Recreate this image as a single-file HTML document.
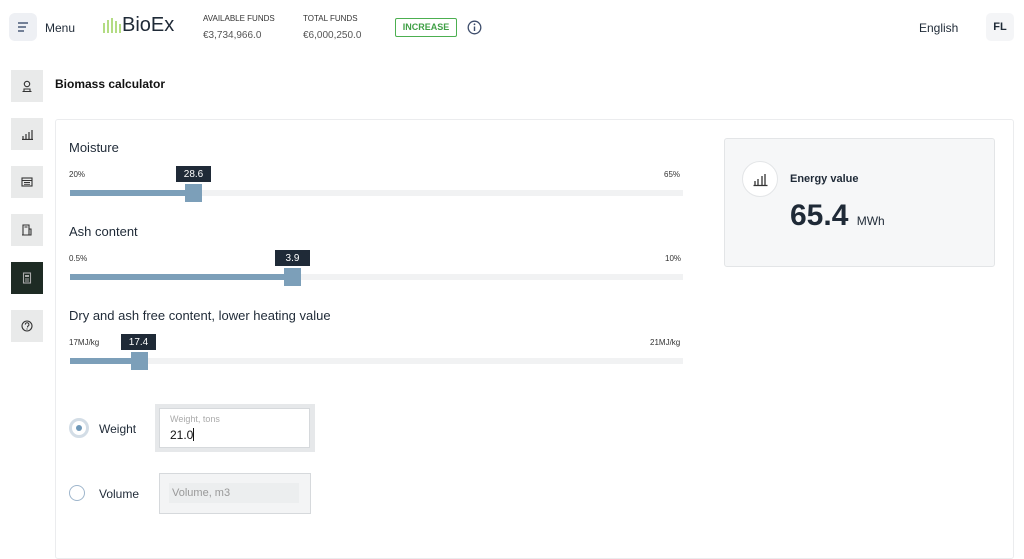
<!DOCTYPE html>
<html><head><meta charset="utf-8"><style>
*{box-sizing:border-box;margin:0;padding:0}
body{width:1024px;height:543px;overflow:hidden;background:#fff;font-family:"Liberation Sans",sans-serif;color:#1f2a37;position:relative}
.a{position:absolute}
.sb{position:absolute;left:11px;width:32px;height:32px;background:#e9eaea;display:flex;align-items:center;justify-content:center}
.track{position:absolute;left:70px;width:613px;height:6px;background:#f1f2f3}
.fill{position:absolute;left:0;top:0;height:6px;background:#7c9fb9}
.thumb{position:absolute;width:17px;height:18px;background:#7c9fb9;top:-6px}
.lab{position:absolute;height:16px;width:35px;background:#1f2a37;color:#fff;font-size:10px;display:flex;align-items:center;justify-content:center}
.ttl{position:absolute;left:69px;font-size:13px;color:#1f2a37}
.sm{position:absolute;font-size:8px;color:#333}
</style></head><body>
<div class="a" style="left:9px;top:13px;width:28px;height:28px;border-radius:6px;background:#eef0f4"></div>
<svg class="a" style="left:16px;top:21px" width="14" height="12"><path d="M2 2h10M2 6h8M2 10h6" stroke="#4a5a78" stroke-width="1.5"/></svg>
<div class="a" style="left:45px;top:21px;font-size:12px">Menu</div>
<svg class="a" style="left:102px;top:17px" width="20" height="18"><g stroke="#9ad15a" stroke-width="1.5"><path d="M2 6v10M6 3v13M10 1v15M14 4v12M18 7v9"/></g></svg>
<div class="a" style="left:122px;top:14px;font-size:20px;color:#1f2a37">BioEx</div>
<div class="a" style="left:203px;top:14px;font-size:8px;color:#333">AVAILABLE FUNDS</div>
<div class="a" style="left:203px;top:30px;font-size:10px;color:#555">€3,734,966.0</div>
<div class="a" style="left:303px;top:14px;font-size:8px;color:#333">TOTAL FUNDS</div>
<div class="a" style="left:303px;top:30px;font-size:10px;color:#555">€6,000,250.0</div>
<div class="a" style="left:395px;top:18px;width:62px;height:19px;border:1px solid #4caf50;border-radius:2px;color:#3f9f45;font-size:9px;font-weight:bold;text-align:center;line-height:17px">INCREASE</div>
<svg class="a" style="left:467px;top:20px" width="15" height="15"><circle cx="7.5" cy="7.5" r="6.3" fill="none" stroke="#3d4d6b" stroke-width="1.3"/><path d="M7.5 6.5v4.5" stroke="#3d4d6b" stroke-width="1.4"/><circle cx="7.5" cy="4.3" r=".9" fill="#3d4d6b"/></svg>
<div class="a" style="left:919px;top:21px;font-size:12px">English</div>
<div class="a" style="left:986px;top:13px;width:28px;height:28px;border-radius:5px;background:#f4f5f7;font-size:11px;font-weight:bold;text-align:center;line-height:28px">FL</div>

<div class="sb" style="top:70px"><svg width="12" height="12"><circle cx="6" cy="4" r="2.7" fill="none" stroke="#333" stroke-width="1.1"/><path d="M1.5 11.5h9M3 11.5v-2.5h6v2.5" fill="none" stroke="#333" stroke-width="1.1"/></svg></div>
<div class="sb" style="top:118px"><svg width="12" height="12"><path d="M2 11v-3M5 11v-5M8 11v-7M11 11v-9M1 11.5h11" stroke="#333" stroke-width="1.2"/></svg></div>
<div class="sb" style="top:166px"><svg width="12" height="12"><rect x="1" y="2" width="10" height="8" fill="none" stroke="#333" stroke-width="1.1"/><path d="M1 4.5h10M3 6.5h6M3 8.3h6" stroke="#333" stroke-width=".9"/></svg></div>
<div class="sb" style="top:214px"><svg width="12" height="12"><path d="M2 11V1h6v10M8 5h2v6H1" fill="none" stroke="#333" stroke-width="1.1"/><path d="M3.5 3h3" stroke="#333"/></svg></div>
<div class="sb" style="top:262px;background:#1e2b24"><svg width="12" height="12"><rect x="2.5" y="1" width="7" height="10" fill="none" stroke="#aaa" stroke-width="1.1"/><rect x="4" y="3" width="4" height="2" fill="#aaa"/><path d="M4 7h4M4 9h4" stroke="#aaa" stroke-width=".9"/></svg></div>
<div class="sb" style="top:310px"><svg width="12" height="12"><circle cx="6" cy="6" r="5" fill="none" stroke="#333" stroke-width="1.1"/><path d="M4.3 4.6a1.8 1.8 0 1 1 2.3 1.7v1.2" fill="none" stroke="#333" stroke-width="1"/><circle cx="6" cy="9" r=".6" fill="#333"/></svg></div>

<div class="a" style="left:55px;top:77px;font-size:12px;font-weight:bold;color:#111">Biomass calculator</div>

<div class="a" style="left:55px;top:119px;width:959px;height:440px;border:1px solid #ebecee;border-radius:3px"></div>

<div class="ttl" style="top:140px">Moisture</div>
<div class="sm" style="left:69px;top:170px">20%</div>
<div class="sm" style="left:664px;top:170px">65%</div>
<div class="lab" style="left:176px;top:166px">28.6</div>
<div class="track" style="top:190px"><div class="fill" style="width:125px"></div><div class="thumb" style="left:115px"></div></div>

<div class="ttl" style="top:224px">Ash content</div>
<div class="sm" style="left:69px;top:254px">0.5%</div>
<div class="sm" style="left:665px;top:254px">10%</div>
<div class="lab" style="left:275px;top:250px">3.9</div>
<div class="track" style="top:274px"><div class="fill" style="width:222px"></div><div class="thumb" style="left:214px"></div></div>

<div class="ttl" style="top:308px">Dry and ash free content, lower heating value</div>
<div class="sm" style="left:69px;top:338px">17MJ/kg</div>
<div class="sm" style="left:650px;top:338px">21MJ/kg</div>
<div class="lab" style="left:121px;top:334px">17.4</div>
<div class="track" style="top:358px"><div class="fill" style="width:68px"></div><div class="thumb" style="left:61px"></div></div>

<div class="a" style="left:69px;top:418px;width:20px;height:20px;border-radius:50%;border:3px solid #d3dde6;background:#fff"></div>
<div class="a" style="left:76px;top:425px;width:6px;height:6px;border-radius:50%;background:#6f98b8"></div>
<div class="a" style="left:99px;top:422px;font-size:12px">Weight</div>
<div class="a" style="left:155px;top:404px;width:160px;height:48px;background:#e6e8ea"></div>
<div class="a" style="left:159px;top:408px;width:151px;height:40px;background:#fff;border:1px solid #d6d9dc"></div>
<div class="a" style="left:170px;top:414px;font-size:9px;color:#aaa">Weight, tons</div>
<div class="a" style="left:170px;top:428px;font-size:12px;color:#111">21.0<span style="display:inline-block;width:1px;height:13px;background:#111;vertical-align:-2px"></span></div>

<div class="a" style="left:69px;top:485px;width:16px;height:16px;border-radius:50%;border:1px solid #9fb6cc"></div>
<div class="a" style="left:99px;top:487px;font-size:12px">Volume</div>
<div class="a" style="left:159px;top:473px;width:152px;height:41px;background:#f3f4f5;border:1px solid #d6d9dc"></div>
<div class="a" style="left:169px;top:483px;width:130px;height:20px;background:#eceeef"></div>
<div class="a" style="left:172px;top:487px;font-size:11px;color:#999">Volume, m3</div>

<div class="a" style="left:724px;top:138px;width:271px;height:129px;background:#f6f7f8;border:1px solid #e3e5e7;border-radius:3px"></div>
<div class="a" style="left:742px;top:161px;width:36px;height:36px;border-radius:50%;background:#fff;border:1px solid #e3e5e7"></div>
<svg class="a" style="left:752px;top:171px" width="16" height="16"><path d="M3 14v-4M6 14v-6M10 14v-9M13 14v-11M1.5 14.5h14" stroke="#333" stroke-width="1.3" fill="none"/></svg>
<div class="a" style="left:790px;top:173px;font-size:11px;font-weight:bold">Energy value</div>
<div class="a" style="left:790px;top:199px;font-size:30px;font-weight:bold;color:#1f2a37">65.4 <span style="font-size:12px;font-weight:normal">MWh</span></div>
</body></html>
